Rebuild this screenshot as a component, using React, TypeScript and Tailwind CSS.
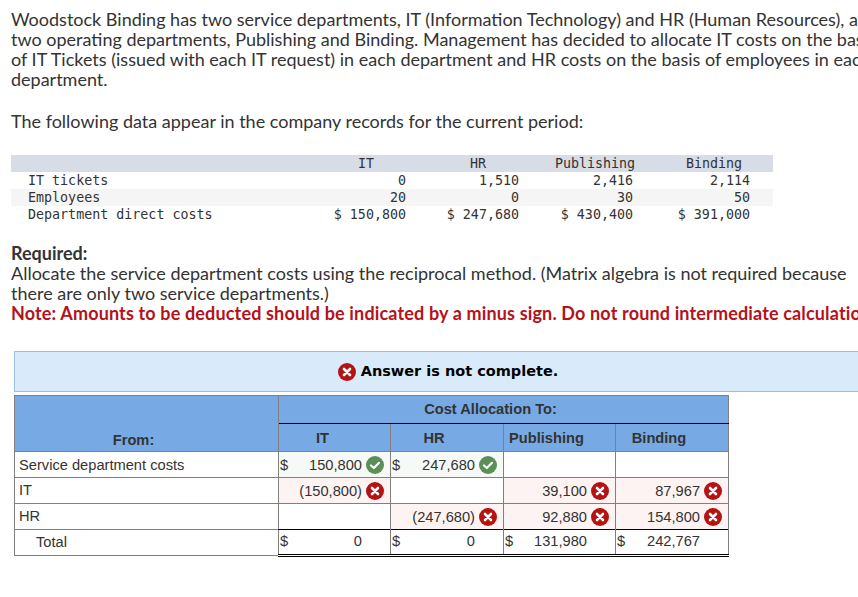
const dataRows = [
  { label: 'IT tickets', values: ['0', '1,510', '2,416', '2,114'], shade: false },
  { label: 'Employees', values: ['20', '0', '30', '50'], shade: true },
  { label: 'Department direct costs', values: ['$ 150,800', '$ 247,680', '$ 430,400', '$ 391,000'], shade: false },
];

const padRight = ['pr-[20px]', 'pr-[21px]', 'pr-[20px]', 'pr-[23px]'];

function StatusIcon({ ok }: { ok: boolean }) {
  return (
    <svg viewBox="0 0 18 18" className="h-[18px] w-[18px] shrink-0">
      <circle cx="9" cy="9" r="9" fill={ok ? '#5b8f58' : '#b51212'} />
      {ok ? (
        <path d="M5 9.5 7.8 12 13 6.8" fill="none" stroke="#fff" strokeWidth="2.2" strokeLinecap="round" strokeLinejoin="round" />
      ) : (
        <path d="M6 6l6 6M12 6l-6 6" fill="none" stroke="#fff" strokeWidth="2.6" strokeLinecap="round" />
      )}
    </svg>
  );
}

type CellProps = { value?: string; dollar?: boolean; status?: 'ok' | 'bad'; total?: boolean };

function Amount({ value, dollar, status, total }: CellProps) {
  const bg = status === 'ok' ? 'bg-[#f6f9f5]' : status === 'bad' ? 'bg-[#fdf3f2]' : 'bg-white';
  const edge = total
    ? 'border-x border-x-[#808080] border-t border-t-black border-b-[3px] border-b-black border-double'
    : 'border border-[#808080]';
  return (
    <td className={`h-[26px] p-0 ${bg} ${edge}`}>
      <div className="flex items-center pl-[1px] pr-[6px]">
        {dollar && <span className={total ? 'mb-[2px]' : ''}>$</span>}
        <span className={`flex-1 pr-[4px] text-right ${total ? 'mb-[2px]' : ''}`}>{value}</span>
        {status ? <StatusIcon ok={status === 'ok'} /> : <span className="w-[18px]" />}
      </div>
    </td>
  );
}

export default function App() {
  return (
    <div className="h-[597px] w-[858px] overflow-hidden bg-white font-['Lato',sans-serif] text-[#333]">
      <div className="whitespace-nowrap pl-[11px] pt-[9px] text-[18px] leading-[20px]">
        <p>
          Woodstock Binding has two service departments, IT (Information Technology) and HR (Human Resources), and
          <br />
          two operating departments, Publishing and Binding. Management has decided to allocate IT costs on the basis
          <br />
          of IT Tickets (issued with each IT request) in each department and HR costs on the basis of employees in each
          <br />
          department.
        </p>
        <p className="mt-[22px]">The following data appear in the company records for the current period:</p>
      </div>

      <table className="ml-[11px] mt-[24px] w-[762px] table-fixed border-collapse font-['DejaVu_Sans_Mono',monospace] text-[13.33px] leading-[17px] text-[#333]">
        <colgroup>
          <col className="w-[315px]" />
          <col className="w-[100px]" />
          <col className="w-[114px]" />
          <col className="w-[113px]" />
          <col className="w-[120px]" />
        </colgroup>
        <thead>
          <tr className="h-[17px] bg-[#d8dce6] font-normal">
            <th className="p-0" />
            <th className="p-0 pr-[20px] pt-[1px] text-center leading-[16px] font-normal">IT</th>
            <th className="p-0 pr-[10px] pt-[1px] text-center leading-[16px] font-normal">HR</th>
            <th className="p-0 pr-[3px] pt-[1px] text-center leading-[16px] font-normal">Publishing</th>
            <th className="p-0 pl-[2px] pt-[1px] text-center leading-[16px] font-normal">Binding</th>
          </tr>
        </thead>
        <tbody>
          {dataRows.map((row) => (
            <tr key={row.label} className={`h-[17px] ${row.shade ? 'bg-[#f5f5f5]' : 'bg-white'}`}>
              <td className="p-0 pl-[17px] pt-[1px] leading-[16px]">{row.label}</td>
              {row.values.map((v, i) => (
                <td key={i} className={`p-0 pt-[1px] text-right leading-[16px] ${padRight[i]}`}>
                  {v}
                </td>
              ))}
            </tr>
          ))}
        </tbody>
      </table>

      <div className="mt-[20px] whitespace-nowrap pl-[11px] text-[18px] leading-[20px]">
        <p className="font-bold">Required:</p>
        <p>
          Allocate the service department costs using the reciprocal method. (Matrix algebra is not required because
          <br />
          there are only two service departments.)
        </p>
        <p className="font-bold tracking-[0.15px] text-[#b5121b]">
          Note: Amounts to be deducted should be indicated by a minus sign. Do not round intermediate calculations.
        </p>
      </div>

      <div className="ml-[14px] mt-[28px] flex h-[41px] w-[860px] items-center justify-center gap-[5px] border border-[#9bbfe0] bg-[#d9ebfa] pl-[8px] font-['DejaVu_Sans',sans-serif] text-[14.5px] font-bold text-black">
        <StatusIcon ok={false} />
        <span className="pt-[1px]">Answer is not complete.</span>
      </div>

      <table className="ml-[14px] mt-[3px] w-[714px] table-fixed border-collapse font-['Liberation_Sans',sans-serif] text-[14.67px] leading-[16px] text-[#333]">
        <colgroup>
          <col className="w-[264px]" />
          <col className="w-[112px]" />
          <col className="w-[113px]" />
          <col className="w-[112px]" />
          <col className="w-[113px]" />
        </colgroup>
        <thead>
          <tr className="h-[28px] bg-[#77aae4]">
            <th rowSpan={2} className="border border-[#808080] p-0 pb-[3px] pr-[26px] align-bottom font-bold">
              From:
            </th>
            <th colSpan={4} className="border border-[#808080] border-b-black p-0 pb-[2px] pr-[26px] font-bold">
              Cost Allocation To:
            </th>
          </tr>
          <tr className="h-[28px] bg-[#77aae4]">
            <th className="border border-[#808080] border-t-black p-0 pr-[24px] font-bold">IT</th>
            <th className="border border-[#808080] border-t-black p-0 pr-[26px] font-bold">HR</th>
            <th className="border border-[#808080] border-t-black p-0 pr-[26px] font-bold">Publishing</th>
            <th className="border border-[#808080] border-t-black p-0 pr-[26px] font-bold">Binding</th>
          </tr>
        </thead>
        <tbody>
          <tr>
            <td className="border border-[#808080] p-0 pl-[4px]">Service department costs</td>
            <Amount dollar value="150,800" status="ok" />
            <Amount dollar value="247,680" status="ok" />
            <Amount />
            <Amount />
          </tr>
          <tr>
            <td className="border border-[#808080] p-0 pb-[2px] pl-[4px]">IT</td>
            <Amount value="(150,800)" status="bad" />
            <Amount />
            <Amount value="39,100" status="bad" />
            <Amount value="87,967" status="bad" />
          </tr>
          <tr>
            <td className="border border-[#808080] p-0 pb-[2px] pl-[4px]">HR</td>
            <Amount />
            <Amount value="(247,680)" status="bad" />
            <Amount value="92,880" status="bad" />
            <Amount value="154,800" status="bad" />
          </tr>
          <tr>
            <td className="border border-[#808080] p-0 pb-[2px] pl-[21px]">Total</td>
            <Amount total dollar value="0" />
            <Amount total dollar value="0" />
            <Amount total dollar value="131,980" />
            <Amount total dollar value="242,767" />
          </tr>
        </tbody>
      </table>
    </div>
  );
}
